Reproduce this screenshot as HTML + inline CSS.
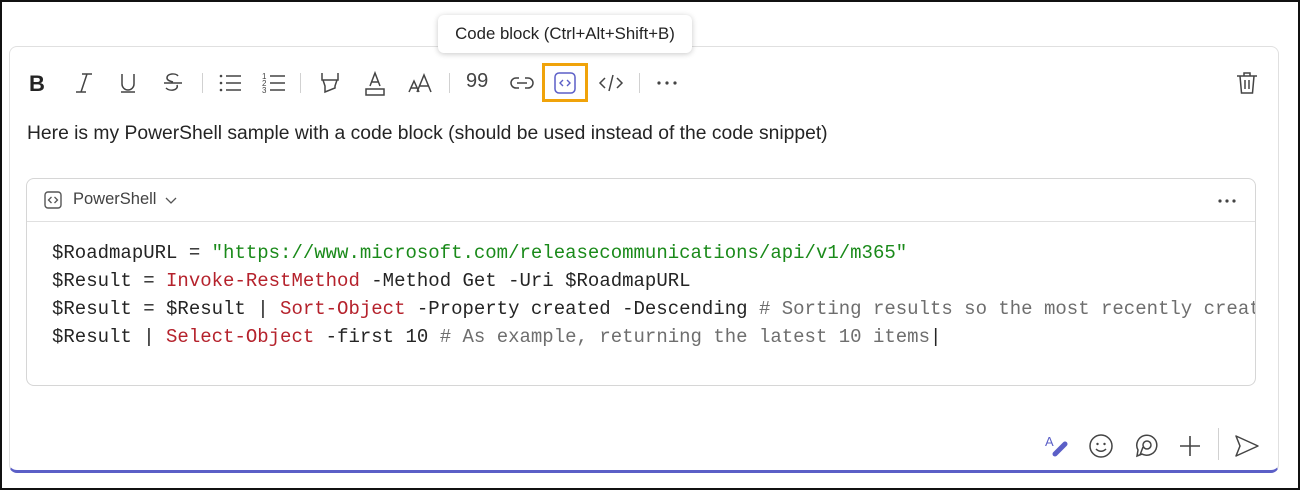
<!DOCTYPE html>
<html><head><style>
*{margin:0;padding:0;box-sizing:border-box}
body{width:1300px;height:490px;background:#fff;position:relative;overflow:hidden;font-family:"Segoe UI","Liberation Sans",sans-serif;color:#242424}
.frame{position:absolute;left:0;top:0;width:1300px;height:490px;border:2px solid #111}
.box{position:absolute;left:9px;top:46px;width:1270px;height:427px;border:1px solid #e0e0e0;border-radius:8px;border-bottom:3px solid #5b5fc7}
.ic{position:absolute;top:70px}
.sep{position:absolute;top:73px;width:1px;height:20px;background:#d1d1d1}
.tip{position:absolute;left:438px;top:15px;width:254px;height:38px;background:#fff;border-radius:6px;box-shadow:0 1px 6px rgba(0,0,0,.22);font-size:16.8px;line-height:38px;text-align:center;color:#242424}
.text{position:absolute;left:27px;top:123px;font-size:19.3px}
.cb{position:absolute;left:26px;top:178px;width:1230px;height:208px;border:1px solid #d6d6d6;border-radius:8px;overflow:hidden}
.cbh{height:43px;border-bottom:1px solid #e0e0e0;position:relative}
.code{position:absolute;left:25px;top:60px;font-family:"Liberation Mono",monospace;font-size:19px;line-height:28px;white-space:pre;color:#242424}
.r{color:#b5222c}.g{color:#1a8a1a}.c{color:#6e6e6e}
</style></head><body>
<div class="frame"></div>
<div class="box"></div>
<div class="ic" style="left:29px;top:71px;font:bold 22px 'Liberation Sans',sans-serif">B</div>
<svg class="ic" style="left:72px" width="24" height="26"><path d="M10 4h10M4 22h10M15 4L9 22" stroke="#444" stroke-width="1.5" fill="none"/></svg>
<svg class="ic" style="left:117px" width="22" height="26"><path d="M5 4v10a6 6 0 0012 0V4M4 22h14" stroke="#444" stroke-width="1.5" fill="none"/></svg>
<svg class="ic" style="left:161px" width="24" height="26"><path d="M17 6c-2-3-11-3-11 2 0 2 2 3 6 4M3 13h18M16 15c2 5-7 7-11 3" stroke="#444" stroke-width="1.5" fill="none"/></svg>
<div class="sep" style="left:202px"></div>
<svg class="ic" style="left:217px" width="26" height="26"><g fill="#444"><circle cx="4" cy="6" r="1.3"/><circle cx="4" cy="13" r="1.3"/><circle cx="4" cy="20" r="1.3"/></g><path d="M9 6h15M9 13h15M9 20h15" stroke="#444" stroke-width="1.5"/></svg>
<svg class="ic" style="left:261px" width="26" height="26"><text x="1" y="9" font-size="8" fill="#444" font-family="Liberation Sans">1</text><text x="1" y="16" font-size="8" fill="#444" font-family="Liberation Sans">2</text><text x="1" y="23" font-size="8" fill="#444" font-family="Liberation Sans">3</text><path d="M9 6h15M9 13h15M9 20h15" stroke="#444" stroke-width="1.5"/></svg>
<div class="sep" style="left:300px"></div>
<svg class="ic" style="left:318px" width="24" height="26"><path d="M4 3v7h16V3M5 10l2 6v6l10-4v-2l2-6" stroke="#444" stroke-width="1.5" fill="none"/></svg>
<svg class="ic" style="left:363px" width="24" height="28"><path d="M7 16l5-13 5 13M8.5 12h7M3 19h18v6H3z" stroke="#444" stroke-width="1.5" fill="none"/></svg>
<svg class="ic" style="left:407px" width="26" height="26"><path d="M2 22l5-11 5 11M3.5 18h7M10 22l7-17 7 17M12.5 16h9" stroke="#444" stroke-width="1.5" fill="none"/></svg>
<div class="sep" style="left:449px"></div>
<div class="ic" style="left:466px;top:70px;font:20px 'Liberation Sans',sans-serif;color:#444">99</div>
<svg class="ic" style="left:509px" width="26" height="26"><path d="M10 8H7a5 5 0 000 10h3M16 8h3a5 5 0 010 10h-3M8 13h10" stroke="#444" stroke-width="1.5" fill="none"/></svg>
<div style="position:absolute;left:542px;top:63px;width:46px;height:39px;border:3px solid #f0a30a"></div>
<svg class="ic" style="left:554px;top:72px" width="22" height="22"><rect x="1" y="1" width="20" height="20" rx="4" stroke="#5b5fc7" stroke-width="1.5" fill="none"/><path d="M9 8l-3 3 3 3M13 8l3 3-3 3" stroke="#5b5fc7" stroke-width="1.4" fill="none"/></svg>
<svg class="ic" style="left:598px" width="26" height="26"><path d="M7 8l-5 5 5 5M19 8l5 5-5 5M15 5l-4 16" stroke="#444" stroke-width="1.5" fill="none"/></svg>
<div class="sep" style="left:639px"></div>
<svg class="ic" style="left:656px" width="22" height="26"><g fill="#444"><circle cx="3" cy="13" r="1.6"/><circle cx="11" cy="13" r="1.6"/><circle cx="19" cy="13" r="1.6"/></g></svg>
<svg class="ic" style="left:1235px;top:70px" width="24" height="26"><path d="M2 6h20M9 6V3h6v3M5 6l1.5 17h11L19 6M10 10v9M14 10v9" stroke="#444" stroke-width="1.5" fill="none"/></svg>
<div class="tip">Code block (Ctrl+Alt+Shift+B)</div>
<div class="text">Here is my PowerShell sample with a code block (should be used instead of the code snippet)</div>
<div class="cb">
 <div class="cbh">
  <svg style="position:absolute;left:17px;top:12px" width="18" height="18"><rect x="1" y="1" width="16" height="16" rx="3" stroke="#555" stroke-width="1.4" fill="none"/><path d="M7.5 6l-3 3 3 3M10.5 6l3 3-3 3" stroke="#555" stroke-width="1.3" fill="none"/></svg>
  <div style="position:absolute;left:46px;top:11px;font-size:16.5px;color:#424242">PowerShell</div>
  <svg style="position:absolute;left:138px;top:18px" width="12" height="8"><path d="M1 1l5 5 5-5" stroke="#555" stroke-width="1.3" fill="none"/></svg>
  <svg style="position:absolute;left:1190px;top:19px" width="20" height="6"><g fill="#444"><circle cx="3" cy="3" r="1.6"/><circle cx="10" cy="3" r="1.6"/><circle cx="17" cy="3" r="1.6"/></g></svg>
 </div>
 <div class="code">$RoadmapURL = <span class="g">"https://www.microsoft.com/releasecommunications/api/v1/m365"</span>
$Result = <span class="r">Invoke-RestMethod</span> -Method Get -Uri $RoadmapURL
$Result = $Result | <span class="r">Sort-Object</span> -Property created -Descending <span class="c"># Sorting results so the most recently created first</span>
$Result | <span class="r">Select-Object</span> -first 10 <span class="c"># As example, returning the latest 10 items</span>|</div>
</div>
<svg style="position:absolute;left:1043px;top:432px" width="28" height="26"><text x="2" y="14" font-size="13" fill="#5b5fc7" font-family="Liberation Sans">A</text><path d="M12 22l10-10" stroke="#5b5fc7" stroke-width="5" stroke-linecap="round"/></svg>
<svg style="position:absolute;left:1088px;top:433px" width="26" height="26"><circle cx="13" cy="13" r="11" stroke="#444" stroke-width="1.5" fill="none"/><circle cx="9.5" cy="11" r="1.2" fill="#444"/><circle cx="16.5" cy="11" r="1.2" fill="#444"/><path d="M8 16c3 3 7 3 10 0" stroke="#444" stroke-width="1.5" fill="none"/></svg>
<svg style="position:absolute;left:1133px;top:433px" width="26" height="26"><path d="M4 23l1-6a10 10 0 114 4z" stroke="#444" stroke-width="1.5" fill="none"/><circle cx="14" cy="12" r="4" stroke="#444" stroke-width="1.5" fill="none"/><path d="M10 14l-3 8" stroke="#444" stroke-width="1.5"/></svg>
<svg style="position:absolute;left:1177px;top:433px" width="26" height="26"><path d="M13 3v20M3 13h20" stroke="#444" stroke-width="1.6"/></svg>
<div style="position:absolute;left:1218px;top:428px;width:1px;height:32px;background:#d1d1d1"></div>
<svg style="position:absolute;left:1233px;top:433px" width="28" height="26"><path d="M3 3l22 10L3 23l4-10z" stroke="#444" stroke-width="1.5" fill="none" stroke-linejoin="round"/></svg>
</body></html>
